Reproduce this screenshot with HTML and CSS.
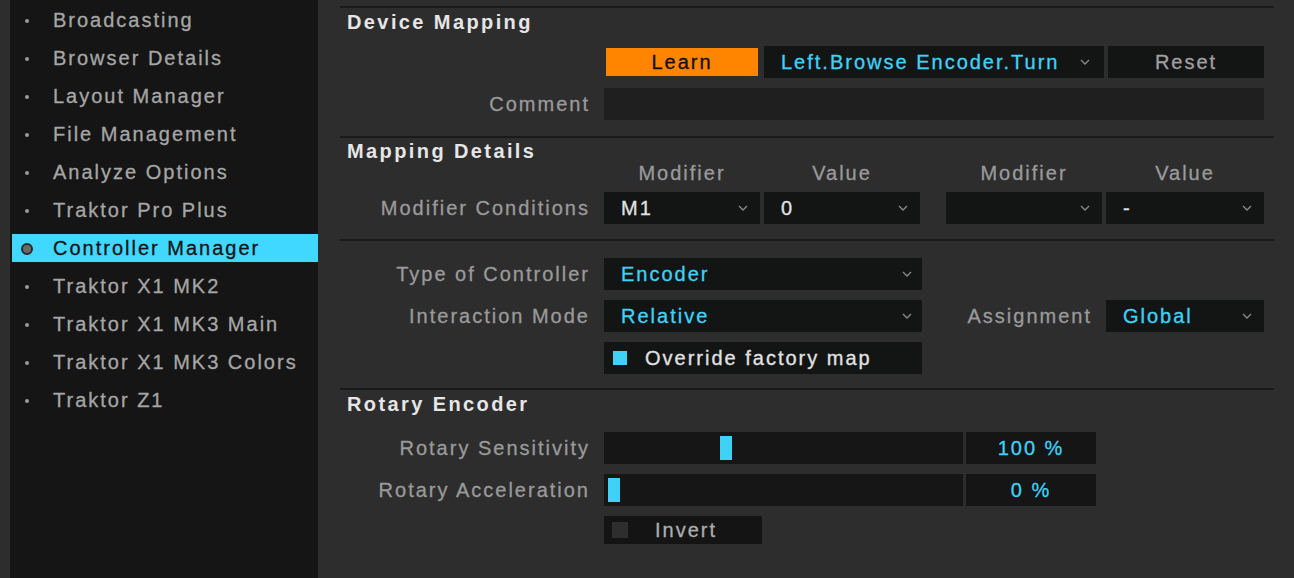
FILE: index.html
```html
<!DOCTYPE html>
<html lang="en">
<head>
    <meta charset="UTF-8">
    <title>Preferences - Controller Manager</title>
    <link rel="stylesheet" href="styles.css">
</head>
<body>
    <div class="app">
        <nav class="sidebar">
            <ul class="menu">
                <li class="menu-item"><span class="bullet"></span>Broadcasting</li>
                <li class="menu-item"><span class="bullet"></span>Browser Details</li>
                <li class="menu-item"><span class="bullet"></span>Layout Manager</li>
                <li class="menu-item"><span class="bullet"></span>File Management</li>
                <li class="menu-item"><span class="bullet"></span>Analyze Options</li>
                <li class="menu-item"><span class="bullet"></span>Traktor Pro Plus</li>
                <li class="menu-item active"><span class="bullet"></span>Controller Manager</li>
                <li class="menu-item"><span class="bullet"></span>Traktor X1 MK2</li>
                <li class="menu-item"><span class="bullet"></span>Traktor X1 MK3 Main</li>
                <li class="menu-item"><span class="bullet"></span>Traktor X1 MK3 Colors</li>
                <li class="menu-item"><span class="bullet"></span>Traktor Z1</li>
            </ul>
        </nav>

        <main class="prefs">
            <section class="group group-device">
                <h2 class="group-title">Device Mapping</h2>
                <div class="row">
                    <span class="label"></span>
                    <div class="controls">
                        <div class="learn-wrap"><button class="learn-btn">Learn</button></div>
                        <div class="select select-mapping">
                            <span class="select-value accent">Left.Browse Encoder.Turn</span>
                            <svg class="chevron" width="10" height="6" viewBox="0 0 10 6"><polyline points="1,1 5,5 9,1" fill="none" stroke="#8a8a8a" stroke-width="1.3"/></svg>
                        </div>
                        <button class="plain-btn">Reset</button>
                    </div>
                </div>
                <div class="row">
                    <span class="label">Comment</span>
                    <div class="controls">
                        <div class="text-field"></div>
                    </div>
                </div>
            </section>

            <section class="group group-details">
                <h2 class="group-title">Mapping Details</h2>
                <div class="row row-head">
                    <span class="label"></span>
                    <div class="controls cond-grid">
                        <span class="col-head">Modifier</span>
                        <span class="col-head">Value</span>
                        <span></span>
                        <span class="col-head">Modifier</span>
                        <span class="col-head">Value</span>
                    </div>
                </div>
                <div class="row">
                    <span class="label">Modifier Conditions</span>
                    <div class="controls cond-grid">
                        <div class="select">
                            <span class="select-value">M1</span>
                            <svg class="chevron" width="10" height="6" viewBox="0 0 10 6"><polyline points="1,1 5,5 9,1" fill="none" stroke="#8a8a8a" stroke-width="1.3"/></svg>
                        </div>
                        <div class="select">
                            <span class="select-value">0</span>
                            <svg class="chevron" width="10" height="6" viewBox="0 0 10 6"><polyline points="1,1 5,5 9,1" fill="none" stroke="#8a8a8a" stroke-width="1.3"/></svg>
                        </div>
                        <span></span>
                        <div class="select">
                            <span class="select-value"></span>
                            <svg class="chevron" width="10" height="6" viewBox="0 0 10 6"><polyline points="1,1 5,5 9,1" fill="none" stroke="#8a8a8a" stroke-width="1.3"/></svg>
                        </div>
                        <div class="select">
                            <span class="select-value">-</span>
                            <svg class="chevron" width="10" height="6" viewBox="0 0 10 6"><polyline points="1,1 5,5 9,1" fill="none" stroke="#8a8a8a" stroke-width="1.3"/></svg>
                        </div>
                    </div>
                </div>

                <hr class="divider">

                <div class="row">
                    <span class="label">Type of Controller</span>
                    <div class="controls">
                        <div class="select select-wide">
                            <span class="select-value accent">Encoder</span>
                            <svg class="chevron" width="10" height="6" viewBox="0 0 10 6"><polyline points="1,1 5,5 9,1" fill="none" stroke="#8a8a8a" stroke-width="1.3"/></svg>
                        </div>
                    </div>
                </div>
                <div class="row">
                    <span class="label">Interaction Mode</span>
                    <div class="controls">
                        <div class="select select-wide">
                            <span class="select-value accent">Relative</span>
                            <svg class="chevron" width="10" height="6" viewBox="0 0 10 6"><polyline points="1,1 5,5 9,1" fill="none" stroke="#8a8a8a" stroke-width="1.3"/></svg>
                        </div>
                        <span class="label label-inline">Assignment</span>
                        <div class="select select-small">
                            <span class="select-value accent">Global</span>
                            <svg class="chevron" width="10" height="6" viewBox="0 0 10 6"><polyline points="1,1 5,5 9,1" fill="none" stroke="#8a8a8a" stroke-width="1.3"/></svg>
                        </div>
                    </div>
                </div>
                <div class="row">
                    <span class="label"></span>
                    <div class="controls">
                        <label class="check check-wide">
                            <span class="check-box checked"></span>
                            <span class="check-text">Override factory map</span>
                        </label>
                    </div>
                </div>
            </section>

            <section class="group group-rotary">
                <h2 class="group-title">Rotary Encoder</h2>
                <div class="row">
                    <span class="label">Rotary Sensitivity</span>
                    <div class="controls">
                        <div class="slider"><span class="slider-handle" style="margin-left: 116px"></span></div>
                        <div class="slider-value">100 %</div>
                    </div>
                </div>
                <div class="row">
                    <span class="label">Rotary Acceleration</span>
                    <div class="controls">
                        <div class="slider"><span class="slider-handle" style="margin-left: 4px"></span></div>
                        <div class="slider-value">0 %</div>
                    </div>
                </div>
                <div class="row row-short">
                    <span class="label"></span>
                    <div class="controls">
                        <label class="check check-invert">
                            <span class="check-box"></span>
                            <span class="check-text dim">Invert</span>
                        </label>
                    </div>
                </div>
            </section>
        </main>
    </div>
</body>
</html>
```

FILE: styles.css
```css
:root {
    --color-bg: #2d2d2d;
    --color-sidebar: #151515;
    --color-field: #131515;
    --color-field-light: #1f1f1f;
    --color-line: #1a1a1a;
    --color-label: #9a9a9a;
    --color-title: #e6e6e6;
    --color-value: #e2e2e2;
    --color-accent: #3fd2f7;
    --color-selected: #40d8ff;
    --color-learn: #ff8400;
}

* {
    margin: 0;
    padding: 0;
    box-sizing: border-box;
}

body {
    background-color: var(--color-bg);
    font-family: "Liberation Sans", Arial, sans-serif;
    font-size: 20px;
    letter-spacing: 2px;
    -webkit-text-stroke: 0.3px currentColor;
    color: var(--color-label);
    height: 578px;
    overflow: hidden;
}

.app {
    display: flex;
    height: 578px;
    padding-left: 10px;
}

/* sidebar */

.sidebar {
    width: 308px;
    background-color: var(--color-sidebar);
    padding-top: 6px;
}

.menu {
    list-style: none;
    display: flex;
    flex-direction: column;
    gap: 10px;
}

.menu-item {
    display: flex;
    align-items: center;
    height: 28px;
    margin-left: 2px;
    padding-top: 1px;
    color: #a6a6a6;
}

.bullet {
    width: 30px;
    height: 28px;
    margin-right: 11px;
    display: flex;
    align-items: center;
    justify-content: center;
}

.bullet::before {
    content: "";
    width: 4px;
    height: 4px;
    border-radius: 50%;
    background-color: #9a9a9a;
}

.menu-item.active {
    background-color: var(--color-selected);
    color: #141414;
}

.menu-item.active .bullet::before {
    width: 8px;
    height: 8px;
    background-color: #6a6a6a;
    border: 2px solid #2a2a2a;
}

/* main panel */

.prefs {
    flex: 1;
    padding: 6px 20px 0 22px;
}

.group {
    border-top: 2px solid var(--color-line);
    display: flex;
    flex-direction: column;
    gap: 10px;
}

.group-device {
    padding-bottom: 16px;
}

.group-details {
    padding-bottom: 14px;
}

.group-title {
    font-size: 20px;
    font-weight: bold;
    -webkit-text-stroke: 0;
    color: var(--color-title);
    line-height: 28px;
    padding-left: 7px;
    letter-spacing: 2.4px;
}

.group-details .group-title {
    line-height: 26px;
    margin-bottom: -10px;
}

.group-rotary .group-title {
    margin-bottom: 4px;
}

.row {
    display: flex;
    align-items: center;
    gap: 14px;
    height: 32px;
}

.row-head {
    height: 18px;
}

.row-short {
    height: 28px;
}

.label {
    width: 250px;
    flex-shrink: 0;
    text-align: right;
    white-space: nowrap;
    line-height: 32px;
    margin-right: -2px;
}

.label-inline {
    width: auto;
    margin-left: auto;
    margin-right: 0;
}

.controls {
    width: 660px;
    height: 100%;
    display: flex;
    align-items: center;
    gap: 4px;
    margin-left: 2px;
}

.row:not(.row-head) .controls > * {
    height: 100%;
}

.divider {
    border: none;
    border-top: 2px solid var(--color-line);
    margin: 5px 0 7px;
}

/* fields */

.learn-wrap {
    width: 156px;
    padding: 2px;
}

.learn-btn {
    width: 100%;
    height: 100%;
    border: none;
    background-color: var(--color-learn);
    color: #111;
    font: inherit;
    letter-spacing: inherit;
}

.plain-btn {
    width: 156px;
    border: none;
    background-color: var(--color-field);
    color: #a0a0a0;
    font: inherit;
    letter-spacing: inherit;
}

.text-field {
    width: 660px;
    background-color: var(--color-field-light);
}

.select {
    display: flex;
    align-items: center;
    justify-content: space-between;
    background-color: var(--color-field);
    padding: 0 12px 0 17px;
    color: var(--color-value);
    white-space: nowrap;
}

.select-mapping {
    width: 340px;
    padding-right: 14px;
}

.select-wide {
    width: 318px;
    padding-right: 10px;
}

.select-small {
    width: 158px;
    margin-left: 10px;
    padding-right: 12px;
}

.accent {
    color: var(--color-accent);
}

.chevron {
    flex-shrink: 0;
}

.cond-grid {
    display: grid;
    grid-template-columns: 156px 156px 18px 156px 158px;
    gap: 0 4px;
}

.col-head {
    text-align: center;
    line-height: 18px;
}

.check {
    display: flex;
    align-items: center;
    background-color: var(--color-field);
}

.check-wide {
    width: 318px;
    padding-left: 9px;
    gap: 18px;
}

.check-box {
    width: 14px;
    height: 14px;
    background-color: var(--color-accent);
}

.check-text {
    color: var(--color-value);
}

.check-invert {
    width: 158px;
    padding-left: 8px;
    gap: 27px;
    background-color: #141414;
}

.check-invert .check-box {
    width: 16px;
    height: 16px;
    background-color: #2e2e2e;
}

.dim {
    color: #adadad;
}

.slider {
    width: 359px;
    display: flex;
    align-items: center;
    background-color: #161616;
}

.slider-handle {
    width: 12px;
    height: 24px;
    background-color: var(--color-accent);
}

.slider-value {
    width: 130px;
    margin-left: -1px;
    display: flex;
    align-items: center;
    justify-content: center;
    background-color: #151515;
    color: var(--color-accent);
}
```
